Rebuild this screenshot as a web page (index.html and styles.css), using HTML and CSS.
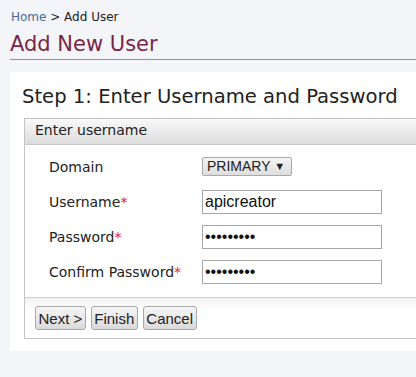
FILE: index.html
```html
<!DOCTYPE html>
<html>
<head>
<meta charset="utf-8">
<link rel="stylesheet" href="styles.css">
</head>
<body>
<div class="breadcrumb"><a class="crumb-link" href="#">Home</a> &gt; Add User</div>
<h1 class="page-title">Add New User</h1>
<div class="panel">
  <h2 class="step-title">Step 1: Enter Username and Password</h2>
  <div class="box">
    <div class="box-head">Enter username</div>
    <div class="box-body">
      <div class="row">
        <span class="label">Domain</span>
        <span class="select">PRIMARY <span class="arrow">▼</span></span>
      </div>
      <div class="row">
        <span class="label">Username<span class="req">*</span></span>
        <input class="field" type="text" value="apicreator">
      </div>
      <div class="row">
        <span class="label">Password<span class="req">*</span></span>
        <input class="field" type="password" value="123456789">
      </div>
      <div class="row">
        <span class="label">Confirm Password<span class="req">*</span></span>
        <input class="field" type="password" value="123456789">
      </div>
    </div>
    <div class="box-foot">
      <button class="btn">Next &gt;</button>
      <button class="btn">Finish</button>
      <button class="btn">Cancel</button>
    </div>
  </div>
</div>
</body>
</html>
```

FILE: styles.css
```css
html, body {
  margin: 0;
  padding: 0;
  overflow: hidden;
}
body {
  background: #f3f5f9;
  font-family: "DejaVu Sans", sans-serif;
  color: #222;
  width: 416px;
  height: 377px;
}
.breadcrumb {
  font-size: 12px;
  padding: 10px 0 0 11px;
  line-height: 14px;
  color: #222;
}
.crumb-link {
  color: #4a6a98;
  text-decoration: none;
}
.page-title {
  margin: 8px 0 0 10px;
  font-size: 21px;
  font-weight: normal;
  color: #7a2545;
  line-height: 24px;
  padding-bottom: 3px;
  border-bottom: 1px solid #8795b8;
}
.panel {
  margin: 12px 0 0 10px;
  width: 560px;
  background: #fff;
  padding: 13px 0 12px 12px;
}
.step-title {
  margin: 0 0 10px 0;
  font-size: 19.6px;
  font-weight: normal;
  line-height: 23px;
  color: #222;
}
.box {
  margin-left: 2px;
  border: 1px solid #c4c4c4;
  width: 520px;
}
.box-head {
  height: 25px;
  line-height: 23px;
  padding-left: 10px;
  font-size: 14px;
  color: #222;
  background: linear-gradient(#f9f9f9, #dcdcdc);
  border-bottom: 1px solid #c8c8c8;
}
.box-body {
  padding: 4px 0 8px 24px;
}
.row {
  display: grid;
  grid-template-columns: 153px auto;
  align-items: center;
  height: 35px;
}
.label {
  font-size: 14px;
  color: #222;
}
.req {
  color: #e0202a;
}
.select {
  justify-self: start;
  border: 1px solid #a8a8a8;
  border-radius: 2px;
  background: linear-gradient(#f4f4f4, #dedede);
  font-family: "Liberation Sans", Arial, sans-serif;
  font-size: 14px;
  line-height: 17px;
  padding-left: 4px;
  color: #222;
  box-sizing: border-box;
  height: 19px;
  width: 90px;
}
.arrow {
  font-size: 11px;
  vertical-align: 1px;
}
.field {
  justify-self: start;
  width: 180px;
  height: 24px;
  box-sizing: border-box;
  border: 1px solid #a6a6a6;
  padding: 0 2px;
  margin: 0;
  font-family: "Liberation Sans", Arial, sans-serif;
  font-size: 16px;
  color: #111;
  background: #fff;
  outline: none;
}
.box-foot {
  border-top: 1px solid #d0d0d0;
  background: linear-gradient(#f2f2f2, #fff 12px);
  padding: 8px 0 8px 10px;
  display: flex;
  gap: 5px;
}
.btn {
  font-family: "Liberation Sans", Arial, sans-serif;
  font-size: 15px;
  height: 24px;
  padding: 0 2.5px;
  margin: 0;
  border: 1px solid #a8a8a8;
  border-radius: 3px;
  background: linear-gradient(#f6f6f6, #dadada);
  color: #222;
}
```
